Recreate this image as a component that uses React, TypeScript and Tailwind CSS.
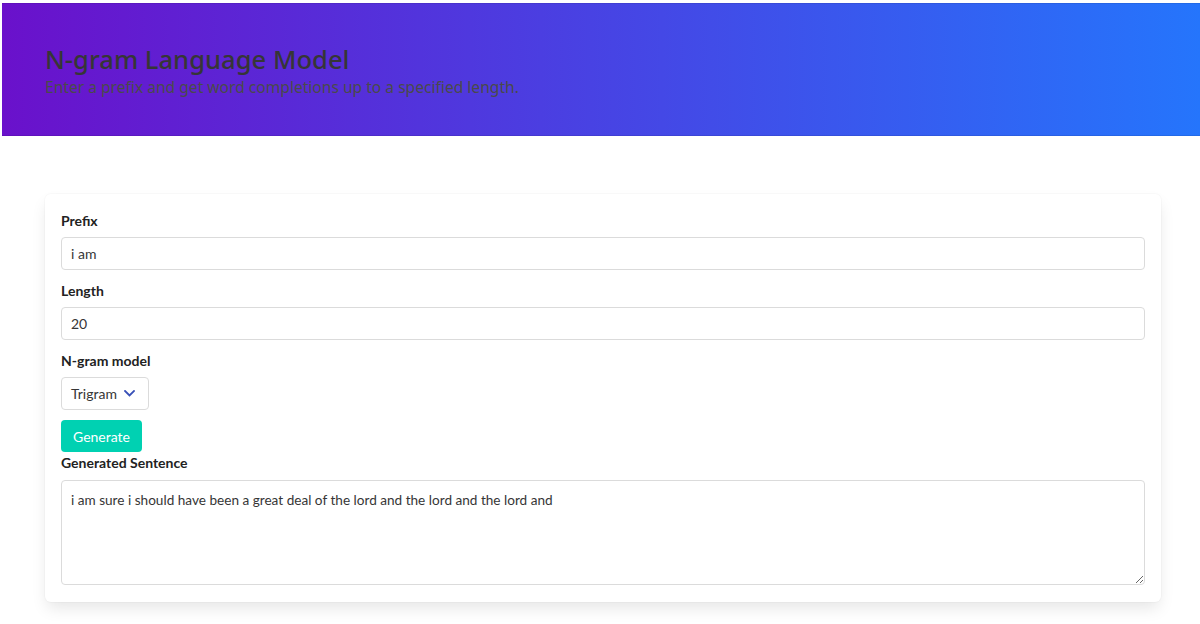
import React from "react";

export default function App() {
  const headFont = { fontFamily: '"Noto Sans", "Open Sans", Arial, sans-serif' };
  const bodyFont = { fontFamily: 'Lato, "Noto Sans", Arial, sans-serif' };
  return (
    <div className="min-h-[624px] bg-white pl-[2px] pt-[3px] text-[#363636]">
      <header
        className="h-[133px] border-y border-[rgba(0,0,0,0.08)] bg-[linear-gradient(to_right,#6a11cb,#2575fc)] pl-[43px] pt-[41px]"
        style={headFont}
      >
        <h1 className="text-[25.6px] font-medium leading-[30px] text-[#363636]">N-gram Language Model</h1>
        <p className="mt-[2px] text-[15.6px] leading-[20px] text-[#4a4a4a]">
          Enter a prefix and get word completions up to a specified length.
        </p>
      </header>

      <main
        className="ml-[43px] mt-[58px] w-[1116px] rounded-[6px] bg-white px-[16px] pb-[17px] pt-[17px] shadow-[0_0.5em_1em_-0.125em_rgba(10,10,10,0.1),0_0_0_1px_rgba(10,10,10,0.02)]"
        style={bodyFont}
      >
        <label className="block text-[14px] font-bold leading-[20px] text-[#222]">Prefix</label>
        <input
          readOnly
          value="i am"
          style={bodyFont}
          className="mt-[6px] block h-[33px] w-full rounded-[4px] border border-[#dbdbdb] px-[9px] text-[14px] text-[#363636] outline-none"
        />
        <label className="mt-[11px] block text-[14px] font-bold leading-[20px] text-[#222]">Length</label>
        <input
          readOnly
          value="20"
          style={bodyFont}
          className="mt-[6px] block h-[33px] w-full rounded-[4px] border border-[#dbdbdb] px-[9px] text-[14px] text-[#363636] outline-none"
        />
        <label className="mt-[11px] block text-[14px] font-bold leading-[20px] text-[#222]">N-gram model</label>
        <div className="relative mt-[6px] flex h-[33px] w-[88px] items-center rounded-[4px] border border-[#dbdbdb] pl-[9px] text-[14px] text-[#363636]">
          <span>Trigram</span>
          <svg className="absolute right-[13px] top-[12px]" width="11" height="7" viewBox="0 0 11 7" fill="none">
            <path d="M1 1 L5.5 5.5 L10 1" stroke="#3850b7" strokeWidth="1.8" strokeLinecap="square" />
          </svg>
        </div>
        <button
          style={bodyFont}
          className="mt-[10px] block h-[32px] w-[81px] rounded-[4px] bg-[#00d1b2] text-[14px] text-white"
        >
          Generate
        </button>
        <label className="mt-[1px] block text-[14px] font-bold leading-[20px] text-[#222]">Generated Sentence</label>
        <textarea
          readOnly
          value="i am sure i should have been a great deal of the lord and the lord and the lord and"
          style={bodyFont}
          className="mt-[7px] block h-[105px] w-full resize-y rounded-[4px] border border-[#dbdbdb] px-[9px] py-[9px] text-[13.6px] leading-[20px] text-[#363636] outline-none"
        />
      </main>
    </div>
  );
}
